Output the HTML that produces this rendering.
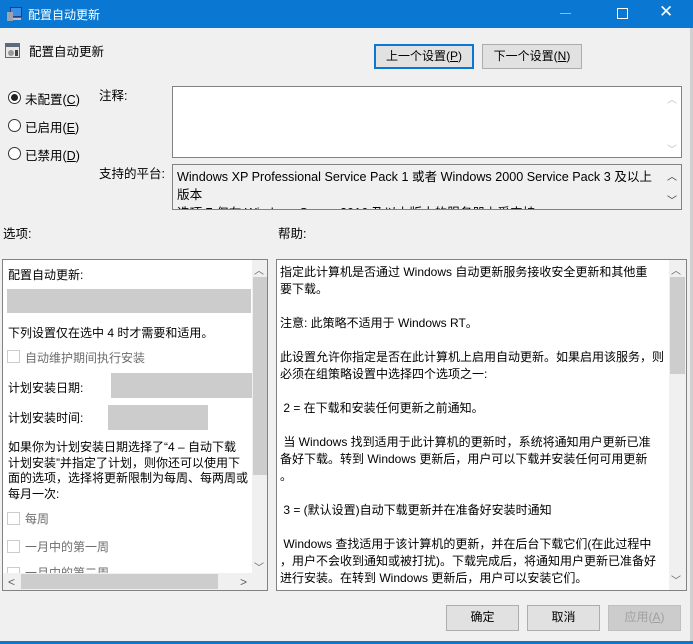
<!DOCTYPE html>
<html><head><meta charset="utf-8"><style>
*{box-sizing:border-box;margin:0;padding:0}
body{width:693px;height:644px;background:#f0f0f0;font-family:"Liberation Sans","Microsoft YaHei","Noto Sans CJK SC",sans-serif;font-size:12px;color:#000;position:relative;overflow:hidden}
.a{position:absolute;white-space:nowrap}
.title{left:0;top:0;width:693px;height:28px;background:#0a78d2;color:#fff}
.btn{position:absolute;border:1px solid #adadad;background:#e1e1e1;text-align:center;line-height:23px}
.box{position:absolute;border:1px solid #828282;background:#fff}
.radio{position:absolute;width:13px;height:13px;border:1px solid #333;border-radius:50%;background:#fff}
.cb{position:absolute;width:13px;height:13px;border:1px solid #ccc;background:#fff}
.gray{color:#6d6d6d}
.sb{position:absolute;background:#f0f0f0}
.th{position:absolute;background:#cdcdcd}
.arr{position:absolute;color:#606060;font-size:10px}
</style></head><body>
<div class="a title"></div>
<svg class="a" style="left:7px;top:6px" width="16" height="16"><rect x="3" y="1" width="12" height="10" fill="#1c3d8a"/><rect x="4" y="2" width="10" height="8" fill="#3a8ee6"/><rect x="0" y="6" width="6" height="9" fill="#9aa4b0"/><rect x="6" y="12" width="8" height="2" fill="#c0c0c0"/></svg>
<div class="a" style="left:28px;top:6px;color:#fff;font-size:12px">配置自动更新</div>
<div class="a" style="left:560px;top:13px;width:11px;height:1px;background:#8fbce8"></div>
<div class="a" style="left:617px;top:8px;width:11px;height:11px;border:1px solid #fff"></div>
<div class="a" style="left:659px;top:2px;color:#fff;font-size:17px">✕</div>
<div class="a" style="right:0;top:28px;width:3px;height:614px;background:#d0d0d0"></div>
<div class="a" style="left:0;top:641px;width:693px;height:3px;background:#0a78d2"></div>

<svg class="a" style="left:5px;top:43px" width="16" height="16"><rect x="0" y="0" width="15" height="15" fill="#5c6b7c"/><rect x="1" y="4" width="13" height="10" fill="#e8e8e8"/><circle cx="6" cy="10" r="3" fill="#9a9a9a"/><rect x="10" y="7" width="3" height="6" fill="#444"/></svg>
<div class="a" style="left:29px;top:41px;font-size:12.5px">配置自动更新</div>

<div class="btn" style="left:374px;top:44px;width:100px;height:25px;border:2px solid #0a78d2;line-height:21px">上一个设置(<u>P</u>)</div>
<div class="btn" style="left:482px;top:44px;width:100px;height:25px">下一个设置(<u>N</u>)</div>

<div class="radio" style="left:8px;top:91px"><div style="position:absolute;left:2px;top:2px;width:7px;height:7px;border-radius:50%;background:#222"></div></div>
<div class="a" style="left:25px;top:89px;font-size:12.5px">未配置(<u>C</u>)</div>
<div class="radio" style="left:8px;top:119px"></div>
<div class="a" style="left:25px;top:117px;font-size:12.5px">已启用(<u>E</u>)</div>
<div class="radio" style="left:8px;top:147px"></div>
<div class="a" style="left:25px;top:145px;font-size:12.5px">已禁用(<u>D</u>)</div>

<div class="a" style="left:99px;top:85px;font-size:12.5px">注释:</div>
<div class="box" style="left:172px;top:86px;width:510px;height:72px"></div>
<div class="arr" style="left:667px;top:91px;color:#c0c0c0">︿</div>
<div class="arr" style="left:667px;top:141px;color:#c0c0c0">﹀</div>
<div class="a" style="left:99px;top:163px;font-size:12.5px">支持的平台:</div>
<div class="box" style="left:172px;top:164px;width:510px;height:46px;background:#f0f0f0;overflow:hidden">
<div style="position:absolute;left:4px;top:3px;font-size:12.6px;line-height:18px;white-space:nowrap">Windows XP Professional Service Pack 1 或者 Windows 2000 Service Pack 3 及以上<br>版本<br>选项 7 仅在 Windows Server 2016 及以上版本的服务器上受支持</div>
<div class="sb" style="left:490px;top:0;width:19px;height:44px"></div>
</div>
<div class="arr" style="left:667px;top:168px;color:#333">︿</div>
<div class="arr" style="left:667px;top:192px;color:#333">﹀</div>

<div class="a" style="left:3px;top:223px;font-size:12.5px">选项:</div>
<div class="a" style="left:278px;top:223px;font-size:12.5px">帮助:</div>

<div class="box" style="left:2px;top:259px;width:266px;height:332px;overflow:hidden">
<div class="a" style="left:5px;top:6px">配置自动更新:</div>
<div class="a" style="left:4px;top:29px;width:244px;height:24px;background:#cccccc"></div>
<div class="a" style="left:5px;top:64px">下列设置仅在选中 4 时才需要和适用。</div>
<div class="cb" style="left:4px;top:90px"></div>
<div class="a gray" style="left:22px;top:89px">自动维护期间执行安装</div>
<div class="a" style="left:5px;top:119px">计划安装日期:</div>
<div class="a" style="left:108px;top:113px;width:141px;height:25px;background:#cccccc"></div>
<div class="a" style="left:5px;top:149px">计划安装时间:</div>
<div class="a" style="left:105px;top:145px;width:100px;height:25px;background:#cccccc"></div>
<div class="a" style="left:5px;top:180px;line-height:15.7px">如果你为计划安装日期选择了“4 – 自动下载<br>计划安装”并指定了计划，则你还可以使用下<br>面的选项，选择将更新限制为每周、每两周或<br>每月一次:</div>
<div class="cb" style="left:4px;top:252px"></div>
<div class="a gray" style="left:22px;top:250px">每周</div>
<div class="cb" style="left:4px;top:280px"></div>
<div class="a gray" style="left:22px;top:278px">一月中的第一周</div>
<div class="cb" style="left:4px;top:307px"></div>
<div class="a gray" style="left:22px;top:304px">一月中的第二周</div>
<div class="sb" style="left:249px;top:0;width:16px;height:330px"></div>
<div class="th" style="left:250px;top:17px;width:14px;height:198px"></div>
<div class="arr" style="left:251px;top:2px">︿</div>
<div class="arr" style="left:251px;top:299px">﹀</div>
<div class="sb" style="left:0;top:313px;width:249px;height:17px"></div>
<div class="th" style="left:18px;top:314px;width:197px;height:15px"></div>
<div class="arr" style="left:5px;top:315px;font-size:12px">&lt;</div>
<div class="arr" style="left:237px;top:315px;font-size:12px">&gt;</div>
</div>

<div class="box" style="left:276px;top:259px;width:411px;height:332px;overflow:hidden">
<div class="a" style="left:3px;top:4px;line-height:17px;font-size:12px">指定此计算机是否通过 Windows 自动更新服务接收安全更新和其他重<br>要下载。<br><br>注意: 此策略不适用于 Windows RT。<br><br>此设置允许你指定是否在此计算机上启用自动更新。如果启用该服务，则<br>必须在组策略设置中选择四个选项之一:<br><br>&nbsp;2 = 在下载和安装任何更新之前通知。<br><br>&nbsp;当 Windows 找到适用于此计算机的更新时，系统将通知用户更新已准<br>备好下载。转到 Windows 更新后，用户可以下载并安装任何可用更新<br>。<br><br>&nbsp;3 = (默认设置)自动下载更新并在准备好安装时通知<br><br>&nbsp;Windows 查找适用于该计算机的更新，并在后台下载它们(在此过程中<br>，用户不会收到通知或被打扰)。下载完成后，将通知用户更新已准备好<br>进行安装。在转到 Windows 更新后，用户可以安装它们。</div>
<div class="sb" style="left:392px;top:0;width:17px;height:330px"></div>
<div class="th" style="left:393px;top:17px;width:15px;height:97px"></div>
<div class="arr" style="left:394px;top:2px">︿</div>
<div class="arr" style="left:394px;top:312px">﹀</div>
</div>

<div class="btn" style="left:446px;top:605px;width:73px;height:26px">确定</div>
<div class="btn" style="left:527px;top:605px;width:73px;height:26px">取消</div>
<div class="btn" style="left:608px;top:605px;width:73px;height:26px;background:#cccccc;border-color:#bfbfbf;color:#a0a0a0">应用(<u>A</u>)</div>
</body></html>
